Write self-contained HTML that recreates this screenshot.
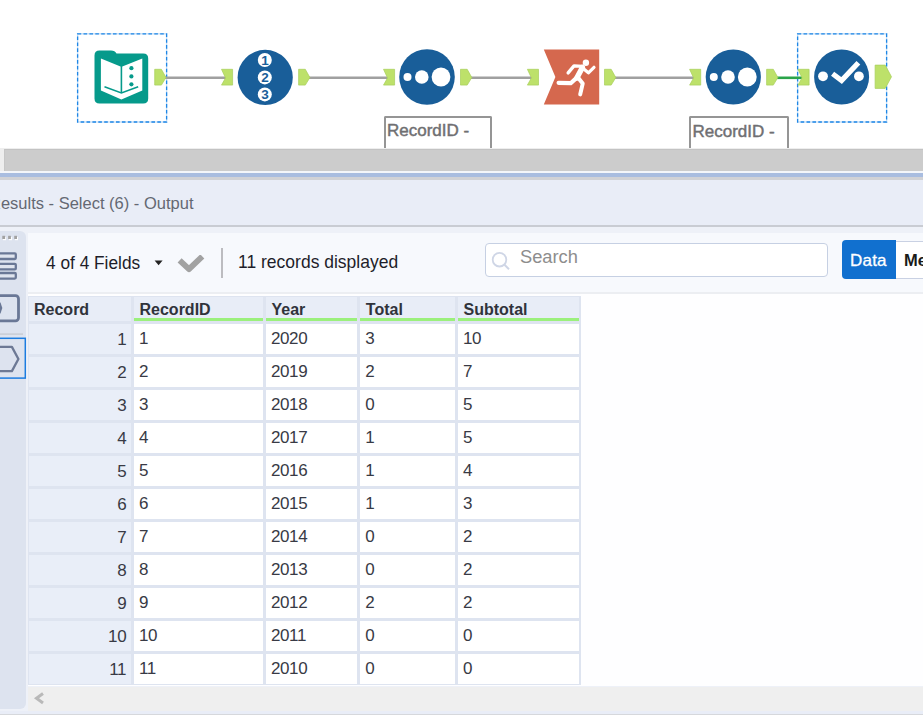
<!DOCTYPE html>
<html><head><meta charset="utf-8">
<style>
*{margin:0;padding:0;box-sizing:border-box}
html,body{width:923px;height:715px;overflow:hidden;background:#fff;font-family:"Liberation Sans",sans-serif}
.abs{position:absolute}
#canvas{position:absolute;left:0;top:0;width:923px;height:149px}
.lbl{position:absolute;background:#fff;border:2px solid #959595;border-bottom:none;border-radius:2px 2px 0 0;font-size:17px;font-weight:normal;-webkit-text-stroke:0.45px #6f6f72;color:#6f6f72;white-space:nowrap}
.t{position:absolute;white-space:nowrap;font-size:17px;color:#1e1e2a}
#tbl{position:absolute;left:28px;top:296px}
.hd{position:absolute;top:297px;height:21px;background:#e8edf7;font-weight:bold;font-size:16px;color:#30333b}
.gl{position:absolute;background:#dce3ef}
.td{color:#383a45;letter-spacing:-0.4px}
</style></head><body>
<svg id="canvas" width="923" height="149" viewBox="0 0 923 149">
  <!-- selection boxes -->
  <rect x="77.6" y="33.8" width="89" height="88.2" fill="none" stroke="#c2dcf6" stroke-width="1.3"/>
  <rect x="77.6" y="33.8" width="89" height="88.2" fill="none" stroke="#1f87e6" stroke-width="1.3" stroke-dasharray="3.6 2.3"/>
  <rect x="797.6" y="33.8" width="89" height="88.2" fill="none" stroke="#c2dcf6" stroke-width="1.3"/>
  <rect x="797.6" y="33.8" width="89" height="88.2" fill="none" stroke="#1f87e6" stroke-width="1.3" stroke-dasharray="3.6 2.3"/>
  <!-- connection lines -->
  <g stroke="#a0a0a0" stroke-width="2.5">
    <line x1="164" y1="77.8" x2="227" y2="77.8"/>
    <line x1="308" y1="77.8" x2="389" y2="77.8"/>
    <line x1="470" y1="77.8" x2="533" y2="77.8"/>
    <line x1="614" y1="77.8" x2="695" y2="77.8"/>
  </g>
  <line x1="775" y1="77.8" x2="804" y2="77.8" stroke="#2aa44a" stroke-width="2.6"/>
  <!-- connectors -->
  <defs>
    <path id="outc" d="M0 0 H6.7 L11.3 8.2 L6.7 15.8 H0 Z" fill="#bde16a" stroke="#a8cf5a" stroke-width="0.7"/>
    <path id="inc" d="M0 0 H11.1 V15.8 H0 L4 8.6 Z" fill="#bde16a" stroke="#a8cf5a" stroke-width="0.7"/>
  </defs>
  <use href="#outc" x="154.7" y="69.3"/>
  <use href="#inc" x="221.5" y="69.3"/>
  <use href="#outc" x="298.6" y="69.3"/>
  <use href="#inc" x="383.5" y="69.3"/>
  <use href="#outc" x="460.5" y="69.3"/>
  <use href="#inc" x="527.4" y="69.3"/>
  <use href="#outc" x="604.5" y="69.3"/>
  <use href="#inc" x="689.6" y="69.3"/>
  <use href="#outc" x="766.6" y="69.3"/>
  <use href="#inc" x="798" y="69.3"/>
  <path d="M875.1 65.1 H885.2 L891.5 76.8 L885.2 88.4 H875.1 Z" fill="#bde16a" stroke="#a8cf5a" stroke-width="0.7"/>
  <!-- teal input tool -->
  <path d="M99.5 50.5 H111 Q115 50.5 116.5 53.6 H143.2 Q148.2 53.6 148.2 58.6 V98.6 Q148.2 103.6 143.2 103.6 H99.5 Q94.5 103.6 94.5 98.6 V55.5 Q94.5 50.5 99.5 50.5 Z" fill="#069a8b"/>
  <path d="M100.9 58.6 L120.5 66.4 H122.3 L142.3 58.6 V90.5 L121.4 99.5 L100.9 90.5 Z" fill="#fff"/>
  <line x1="121.4" y1="66" x2="121.4" y2="93" stroke="#069a8b" stroke-width="1.6"/>
  <polyline points="104.5,86.8 121.4,93 138.2,86.8" fill="none" stroke="#069a8b" stroke-width="1.5"/>
  <circle cx="131.4" cy="68.2" r="2.1" fill="#069a8b"/>
  <circle cx="131.4" cy="76.4" r="2.1" fill="#069a8b"/>
  <circle cx="131.4" cy="84.3" r="2.1" fill="#069a8b"/>
  <!-- 123 tool -->
  <circle cx="265.2" cy="77.4" r="27.6" fill="#195e99"/>
  <g fill="#fff"><circle cx="264.8" cy="60" r="7"/><circle cx="264.8" cy="77.4" r="7"/><circle cx="264.8" cy="94.4" r="7"/></g>
  <g fill="#195e99" font-family="Liberation Sans" font-weight="bold" font-size="13.5" text-anchor="middle">
    <text x="265" y="64.9">1</text><text x="265" y="82.3">2</text><text x="265" y="99.3">3</text>
  </g>
  <!-- record id tool 1 -->
  <circle cx="427" cy="77" r="27.8" fill="#195e99"/>
  <g fill="#fff"><circle cx="407.5" cy="77" r="4"/><circle cx="421.8" cy="77" r="6.8"/><circle cx="441" cy="77" r="9.4"/></g>
  <!-- red tool -->
  <path d="M543.8 49.5 H599.2 V104.6 H543.8 L555.4 77 Z" fill="#d5684e"/>
  <g fill="none" stroke="#fff" stroke-linecap="round" stroke-linejoin="round">
    <circle cx="585.9" cy="62.7" r="3.2" fill="#fff" stroke="none"/>
    <path d="M582.4 67.4 L576.8 78" stroke-width="5.4"/>
    <path d="M582.4 66.3 L574 65.9 L568.1 72.9" stroke-width="3.3"/>
    <path d="M583.8 69 L588.4 72.8 L594 67.3" stroke-width="3.2"/>
    <path d="M576 78.4 L570.7 83.2 L558.6 82.9" stroke-width="4.2"/>
    <path d="M578.2 77.8 L582.7 83.6 L580.2 94.4" stroke-width="4"/>
  </g>
  <!-- record id tool 2 -->
  <circle cx="733.3" cy="77" r="27.6" fill="#195e99"/>
  <g fill="#fff"><circle cx="713.8" cy="77" r="4"/><circle cx="728" cy="77" r="6.8"/><circle cx="747.3" cy="77" r="9.4"/></g>
  <!-- select tool -->
  <circle cx="841.6" cy="77" r="27.5" fill="#195e99"/>
  <circle cx="823" cy="76.3" r="4.9" fill="#fff"/>
  <circle cx="858.9" cy="76.3" r="4.9" fill="#fff"/>
  <polyline points="832.6,73.8 841.6,80.6 858.4,62.8" fill="none" stroke="#fff" stroke-width="5.2"/>
</svg>
<div class="lbl" style="left:383.5px;top:115.5px;width:108px;height:34px"><span style="position:absolute;left:1.5px;top:3.7px">RecordID -</span></div>
<div class="lbl" style="left:689px;top:116px;width:100px;height:34px"><span style="position:absolute;left:1.5px;top:3.7px">RecordID -</span></div>

<!-- gray bar -->
<div class="abs" style="left:0;top:148px;width:923px;height:23px;background:#eeeeee"></div>
<div class="abs" style="left:3.5px;top:148.6px;width:920px;height:22.3px;background:#cccccc;border-top:1px solid #c3c3c3;border-left:1px solid #c6c6c6"></div>
<div class="abs" style="left:0;top:171px;width:923px;height:1.5px;background:#f4f6fa"></div>
<div class="abs" style="left:0;top:172.5px;width:923px;height:4.5px;background:#a9bde0"></div>
<div class="abs" style="left:0;top:176.8px;width:923px;height:3.2px;background:#d1d2d6"></div>
<div class="abs" style="left:0;top:180px;width:923px;height:44.6px;background:#e9edf7"></div>
<div class="t" style="left:-11px;top:194px;font-size:16.5px;color:#646873">Results - Select (6) - Output</div>
<div class="abs" style="left:0;top:224.6px;width:923px;height:2.2px;background:#c9ccd3"></div>
<div class="abs" style="left:0;top:226.8px;width:923px;height:488px;background:#eef1f8"></div>

<!-- sidebar -->
<div class="abs" style="left:0;top:231.4px;width:26px;height:477.6px;background:#dde3ef;border-radius:0 6px 6px 0"></div>
<svg class="abs" style="left:0;top:230px" width="28" height="160" viewBox="0 230 28 160">
  <g fill="#ffffff"><rect x="3" y="237" width="3" height="3.2"/><rect x="9" y="237" width="3" height="3.2"/><rect x="15" y="237" width="3" height="3.2"/></g>
  <g fill="#a2a2a2"><rect x="2.3" y="235.8" width="2.8" height="3.2"/><rect x="8.1" y="235.8" width="2.8" height="3.2"/><rect x="14.2" y="235.8" width="2.8" height="3.2"/></g>
  <g fill="#dfe4ee" stroke="#6a7896" stroke-width="2.3">
    <rect x="-4" y="253.4" width="19.8" height="5.6" rx="1"/>
    <rect x="-4" y="263.8" width="19.8" height="5.6" rx="1"/>
    <rect x="-4" y="273" width="19.8" height="5.6" rx="1"/>
  </g>
  <rect x="-4" y="295.7" width="22.5" height="25.1" rx="3" fill="none" stroke="#6a7896" stroke-width="2.8"/>
  <path d="M-2 302.6 H0.5 L2.3 308 L0.5 313.6 H-2 Z" fill="#6a7896"/>
  <rect x="0" y="333.4" width="23" height="1.4" fill="#c6cbd3"/>
  <rect x="-2" y="338.3" width="27.3" height="39.8" fill="none" stroke="#1c7ce0" stroke-width="1.5"/>
  <path d="M-4 346.9 H11.9 L18.4 359 L11.9 371.1 H-4" fill="none" stroke="#6d7995" stroke-width="2.3" stroke-linejoin="round"/>
</svg>
<!-- toolbar -->
<div class="abs" style="left:28px;top:232.7px;width:895px;height:60px;background:#f7f9fd"></div>
<div class="abs" style="left:28px;top:292.4px;width:895px;height:394px;background:#fefeff"></div>
<div class="abs" style="left:28px;top:292.4px;width:895px;height:1.4px;background:#eceef2"></div>

<div class="t" style="left:46px;top:252.6px;font-size:17.3px;transform:scaleY(1.06);transform-origin:0 15px">4 of 4 Fields</div>
<svg class="abs" style="left:150px;top:255px" width="60" height="22">
  <path d="M4.6 5.6 H12.6 L8.6 10.3 Z" fill="#222"/>
  <polyline points="29.6,5.4 39,14.2 52.3,1.4" fill="none" stroke="#a2a2a2" stroke-width="5.8" stroke-linejoin="round"/>
</svg>
<div class="abs" style="left:221px;top:247.5px;width:1.7px;height:30px;background:#bcbcc0"></div>
<div class="t" style="left:238px;top:252.3px;font-size:17.5px;transform:scaleY(1.05);transform-origin:0 15px">11 records displayed</div>
<div class="abs" style="left:485px;top:243px;width:343px;height:34.3px;background:#fff;border:1.5px solid #c6d0e3;border-radius:4px"></div>
<svg class="abs" style="left:488px;top:248px" width="30" height="26"><circle cx="11.5" cy="11.7" r="6.8" fill="none" stroke="#cfd6e6" stroke-width="1.8"/><line x1="16.5" y1="16.8" x2="21" y2="21.3" stroke="#cfd6e6" stroke-width="2"/></svg>
<div class="t" style="left:520px;top:246px;font-size:18.3px;color:#8d8d8d">Search</div>
<div class="abs" style="left:842px;top:240px;width:54px;height:39.3px;background:#1170cf;border-radius:4px 0 0 4px"></div>
<div class="t" style="left:850px;top:251px;color:#fff;-webkit-text-stroke:0.3px #fff;letter-spacing:0.2px">Data</div>
<div class="abs" style="left:896px;top:240.5px;width:40px;height:38.5px;background:#fff;border:1px solid #c9d1e3;border-left:none"></div>
<div class="t" style="left:904px;top:251px;color:#1a1a1a;font-weight:bold;font-size:16.5px">Metadata</div>

<!-- table -->
<div class="abs" style="left:27.7px;top:295.5px;width:553.3px;height:389.7px;background:#dee4f0"></div>
<div class="abs" style="left:28.6px;top:297px;width:102.4px;height:24px;background:#e8edf7"></div>
<div class="hd t" style="left:34px;top:301px;background:none;height:auto;font-weight:bold;font-size:16px">Record</div>
<div class="abs" style="left:134px;top:297px;width:129.2px;height:24px;background:#e8edf7"></div>
<div class="abs" style="left:134px;top:318px;width:129.2px;height:3px;background:#9bf07c"></div>
<div class="hd t" style="left:139.5px;top:301px;background:none;height:auto;font-weight:bold;font-size:16px">RecordID</div>
<div class="abs" style="left:266px;top:297px;width:91.2px;height:24px;background:#e8edf7"></div>
<div class="abs" style="left:266px;top:318px;width:91.2px;height:3px;background:#9bf07c"></div>
<div class="hd t" style="left:271.5px;top:301px;background:none;height:auto;font-weight:bold;font-size:16px">Year</div>
<div class="abs" style="left:360.3px;top:297px;width:94.9px;height:24px;background:#e8edf7"></div>
<div class="abs" style="left:360.3px;top:318px;width:94.9px;height:3px;background:#9bf07c"></div>
<div class="hd t" style="left:365.8px;top:301px;background:none;height:auto;font-weight:bold;font-size:16px">Total</div>
<div class="abs" style="left:458px;top:297px;width:121.2px;height:24px;background:#e8edf7"></div>
<div class="abs" style="left:458px;top:318px;width:121.2px;height:3px;background:#9bf07c"></div>
<div class="hd t" style="left:463.5px;top:301px;background:none;height:auto;font-weight:bold;font-size:16px">Subtotal</div>
<div class="abs" style="left:28.6px;top:323.6px;width:102.4px;height:30px;background:#e9eef8"></div>
<div class="abs" style="left:134px;top:323.6px;width:129.2px;height:30px;background:#fff"></div>
<div class="abs" style="left:266px;top:323.6px;width:91.2px;height:30px;background:#fff"></div>
<div class="abs" style="left:360.3px;top:323.6px;width:94.9px;height:30px;background:#fff"></div>
<div class="abs" style="left:458px;top:323.6px;width:121.2px;height:30px;background:#fff"></div>
<div class="t td" style="left:28.6px;width:97.6px;text-align:right;top:330.0px">1</div>
<div class="t td" style="left:139px;top:328.7px">1</div>
<div class="t td" style="left:271px;top:328.7px">2020</div>
<div class="t td" style="left:365.3px;top:328.7px">3</div>
<div class="t td" style="left:463px;top:328.7px">10</div>
<div class="abs" style="left:28.6px;top:356.6px;width:102.4px;height:30px;background:#e9eef8"></div>
<div class="abs" style="left:134px;top:356.6px;width:129.2px;height:30px;background:#fff"></div>
<div class="abs" style="left:266px;top:356.6px;width:91.2px;height:30px;background:#fff"></div>
<div class="abs" style="left:360.3px;top:356.6px;width:94.9px;height:30px;background:#fff"></div>
<div class="abs" style="left:458px;top:356.6px;width:121.2px;height:30px;background:#fff"></div>
<div class="t td" style="left:28.6px;width:97.6px;text-align:right;top:363.0px">2</div>
<div class="t td" style="left:139px;top:361.7px">2</div>
<div class="t td" style="left:271px;top:361.7px">2019</div>
<div class="t td" style="left:365.3px;top:361.7px">2</div>
<div class="t td" style="left:463px;top:361.7px">7</div>
<div class="abs" style="left:28.6px;top:389.6px;width:102.4px;height:30px;background:#e9eef8"></div>
<div class="abs" style="left:134px;top:389.6px;width:129.2px;height:30px;background:#fff"></div>
<div class="abs" style="left:266px;top:389.6px;width:91.2px;height:30px;background:#fff"></div>
<div class="abs" style="left:360.3px;top:389.6px;width:94.9px;height:30px;background:#fff"></div>
<div class="abs" style="left:458px;top:389.6px;width:121.2px;height:30px;background:#fff"></div>
<div class="t td" style="left:28.6px;width:97.6px;text-align:right;top:396.0px">3</div>
<div class="t td" style="left:139px;top:394.7px">3</div>
<div class="t td" style="left:271px;top:394.7px">2018</div>
<div class="t td" style="left:365.3px;top:394.7px">0</div>
<div class="t td" style="left:463px;top:394.7px">5</div>
<div class="abs" style="left:28.6px;top:422.6px;width:102.4px;height:30px;background:#e9eef8"></div>
<div class="abs" style="left:134px;top:422.6px;width:129.2px;height:30px;background:#fff"></div>
<div class="abs" style="left:266px;top:422.6px;width:91.2px;height:30px;background:#fff"></div>
<div class="abs" style="left:360.3px;top:422.6px;width:94.9px;height:30px;background:#fff"></div>
<div class="abs" style="left:458px;top:422.6px;width:121.2px;height:30px;background:#fff"></div>
<div class="t td" style="left:28.6px;width:97.6px;text-align:right;top:429.0px">4</div>
<div class="t td" style="left:139px;top:427.7px">4</div>
<div class="t td" style="left:271px;top:427.7px">2017</div>
<div class="t td" style="left:365.3px;top:427.7px">1</div>
<div class="t td" style="left:463px;top:427.7px">5</div>
<div class="abs" style="left:28.6px;top:455.6px;width:102.4px;height:30px;background:#e9eef8"></div>
<div class="abs" style="left:134px;top:455.6px;width:129.2px;height:30px;background:#fff"></div>
<div class="abs" style="left:266px;top:455.6px;width:91.2px;height:30px;background:#fff"></div>
<div class="abs" style="left:360.3px;top:455.6px;width:94.9px;height:30px;background:#fff"></div>
<div class="abs" style="left:458px;top:455.6px;width:121.2px;height:30px;background:#fff"></div>
<div class="t td" style="left:28.6px;width:97.6px;text-align:right;top:462.0px">5</div>
<div class="t td" style="left:139px;top:460.7px">5</div>
<div class="t td" style="left:271px;top:460.7px">2016</div>
<div class="t td" style="left:365.3px;top:460.7px">1</div>
<div class="t td" style="left:463px;top:460.7px">4</div>
<div class="abs" style="left:28.6px;top:488.6px;width:102.4px;height:30px;background:#e9eef8"></div>
<div class="abs" style="left:134px;top:488.6px;width:129.2px;height:30px;background:#fff"></div>
<div class="abs" style="left:266px;top:488.6px;width:91.2px;height:30px;background:#fff"></div>
<div class="abs" style="left:360.3px;top:488.6px;width:94.9px;height:30px;background:#fff"></div>
<div class="abs" style="left:458px;top:488.6px;width:121.2px;height:30px;background:#fff"></div>
<div class="t td" style="left:28.6px;width:97.6px;text-align:right;top:495.0px">6</div>
<div class="t td" style="left:139px;top:493.7px">6</div>
<div class="t td" style="left:271px;top:493.7px">2015</div>
<div class="t td" style="left:365.3px;top:493.7px">1</div>
<div class="t td" style="left:463px;top:493.7px">3</div>
<div class="abs" style="left:28.6px;top:521.6px;width:102.4px;height:30px;background:#e9eef8"></div>
<div class="abs" style="left:134px;top:521.6px;width:129.2px;height:30px;background:#fff"></div>
<div class="abs" style="left:266px;top:521.6px;width:91.2px;height:30px;background:#fff"></div>
<div class="abs" style="left:360.3px;top:521.6px;width:94.9px;height:30px;background:#fff"></div>
<div class="abs" style="left:458px;top:521.6px;width:121.2px;height:30px;background:#fff"></div>
<div class="t td" style="left:28.6px;width:97.6px;text-align:right;top:528.0px">7</div>
<div class="t td" style="left:139px;top:526.7px">7</div>
<div class="t td" style="left:271px;top:526.7px">2014</div>
<div class="t td" style="left:365.3px;top:526.7px">0</div>
<div class="t td" style="left:463px;top:526.7px">2</div>
<div class="abs" style="left:28.6px;top:554.6px;width:102.4px;height:30px;background:#e9eef8"></div>
<div class="abs" style="left:134px;top:554.6px;width:129.2px;height:30px;background:#fff"></div>
<div class="abs" style="left:266px;top:554.6px;width:91.2px;height:30px;background:#fff"></div>
<div class="abs" style="left:360.3px;top:554.6px;width:94.9px;height:30px;background:#fff"></div>
<div class="abs" style="left:458px;top:554.6px;width:121.2px;height:30px;background:#fff"></div>
<div class="t td" style="left:28.6px;width:97.6px;text-align:right;top:561.0px">8</div>
<div class="t td" style="left:139px;top:559.7px">8</div>
<div class="t td" style="left:271px;top:559.7px">2013</div>
<div class="t td" style="left:365.3px;top:559.7px">0</div>
<div class="t td" style="left:463px;top:559.7px">2</div>
<div class="abs" style="left:28.6px;top:587.6px;width:102.4px;height:30px;background:#e9eef8"></div>
<div class="abs" style="left:134px;top:587.6px;width:129.2px;height:30px;background:#fff"></div>
<div class="abs" style="left:266px;top:587.6px;width:91.2px;height:30px;background:#fff"></div>
<div class="abs" style="left:360.3px;top:587.6px;width:94.9px;height:30px;background:#fff"></div>
<div class="abs" style="left:458px;top:587.6px;width:121.2px;height:30px;background:#fff"></div>
<div class="t td" style="left:28.6px;width:97.6px;text-align:right;top:594.0px">9</div>
<div class="t td" style="left:139px;top:592.7px">9</div>
<div class="t td" style="left:271px;top:592.7px">2012</div>
<div class="t td" style="left:365.3px;top:592.7px">2</div>
<div class="t td" style="left:463px;top:592.7px">2</div>
<div class="abs" style="left:28.6px;top:620.6px;width:102.4px;height:30px;background:#e9eef8"></div>
<div class="abs" style="left:134px;top:620.6px;width:129.2px;height:30px;background:#fff"></div>
<div class="abs" style="left:266px;top:620.6px;width:91.2px;height:30px;background:#fff"></div>
<div class="abs" style="left:360.3px;top:620.6px;width:94.9px;height:30px;background:#fff"></div>
<div class="abs" style="left:458px;top:620.6px;width:121.2px;height:30px;background:#fff"></div>
<div class="t td" style="left:28.6px;width:97.6px;text-align:right;top:627.0px">10</div>
<div class="t td" style="left:139px;top:625.7px">10</div>
<div class="t td" style="left:271px;top:625.7px">2011</div>
<div class="t td" style="left:365.3px;top:625.7px">0</div>
<div class="t td" style="left:463px;top:625.7px">0</div>
<div class="abs" style="left:28.6px;top:653.6px;width:102.4px;height:30px;background:#e9eef8"></div>
<div class="abs" style="left:134px;top:653.6px;width:129.2px;height:30px;background:#fff"></div>
<div class="abs" style="left:266px;top:653.6px;width:91.2px;height:30px;background:#fff"></div>
<div class="abs" style="left:360.3px;top:653.6px;width:94.9px;height:30px;background:#fff"></div>
<div class="abs" style="left:458px;top:653.6px;width:121.2px;height:30px;background:#fff"></div>
<div class="t td" style="left:28.6px;width:97.6px;text-align:right;top:660.0px">11</div>
<div class="t td" style="left:139px;top:658.7px">11</div>
<div class="t td" style="left:271px;top:658.7px">2010</div>
<div class="t td" style="left:365.3px;top:658.7px">0</div>
<div class="t td" style="left:463px;top:658.7px">0</div>
<!-- scrollbar -->
<div class="abs" style="left:27.7px;top:686.9px;width:895.3px;height:23.8px;background:#efefef"></div>
<svg class="abs" style="left:30px;top:690px" width="20" height="18"><polyline points="13,3.5 6.5,8.2 13,13" fill="none" stroke="#b9b9b9" stroke-width="3"/></svg>
<div class="abs" style="left:0;top:710.7px;width:923px;height:3.3px;background:#e9edf7"></div>
<div class="abs" style="left:0;top:713.8px;width:923px;height:1.2px;background:#d6d8dc"></div>
</body></html>
